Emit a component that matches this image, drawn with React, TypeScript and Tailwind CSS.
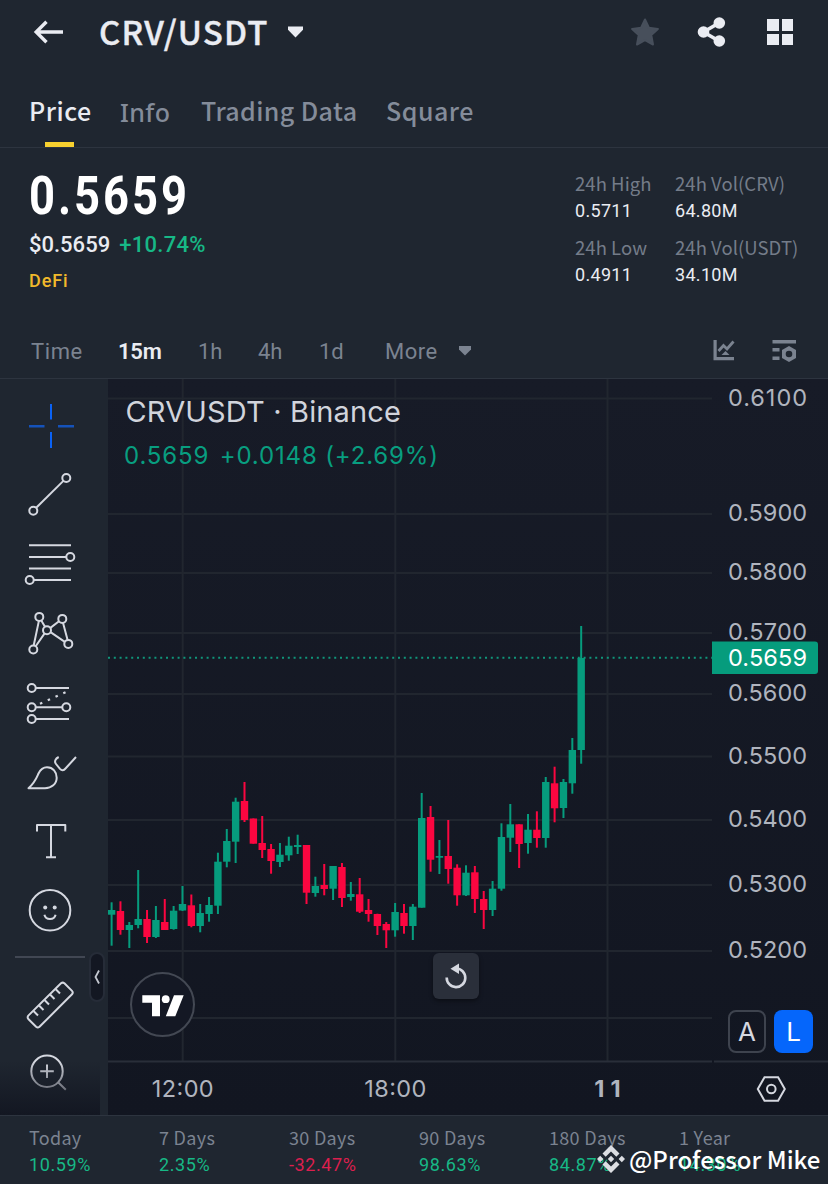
import type { ReactNode } from 'react'
import { clsx } from 'clsx'

const tabs = [
  { label: 'Price', className: "w-[61px] font-['Noto_Sans_CJK_SC',sans-serif] tracking-[0.5px]" },
  { label: 'Info', className: "w-[51px] pt-[2px] font-['Noto_Sans',sans-serif] text-[25px] tracking-[0.4px]" },
  { label: 'Trading Data', className: "w-[155px] font-['Noto_Sans_CJK_SC',sans-serif] tracking-[0.4px]" },
  { label: 'Square', className: "w-[87px] font-['Noto_Sans_CJK_SC',sans-serif] tracking-[0.5px]" },
]

const stats = [
  { label: '24h High', value: '0.5711' },
  { label: '24h Vol(CRV)', value: '64.80M' },
  { label: '24h Low', value: '0.4911' },
  { label: '24h Vol(USDT)', value: '34.10M' },
]

const periods = [
  { label: 'Today', value: '10.59%' },
  { label: '7 Days', value: '2.35%' },
  { label: '30 Days', value: '-32.47%' },
  { label: '90 Days', value: '98.63%' },
  { label: '180 Days', value: '84.87%' },
  { label: '1 Year', value: '14.30%' },
]

const priceLines = [
  { y: 19.5, label: '0.6100' },
  { y: 135, label: '0.5900' },
  { y: 194, label: '0.5800' },
  { y: 254, label: '0.5700' },
  { y: 315, label: '0.5600' },
  { y: 377.5, label: '0.5500' },
  { y: 441, label: '0.5400' },
  { y: 506, label: '0.5300' },
  { y: 572, label: '0.5200' },
  { y: 639, label: '' },
]

const timeLines = [
  { x: 74.7, label: '12:00', width: 62 },
  { x: 287.3, label: '18:00', width: 62 },
  { x: 499.5, label: '11', width: 26.5 },
]

// high, body top, body bottom, low, 1 = up
const candles = [
  [902.3, 910, 914.7, 945.7, 1], [901.3, 911, 930, 934.7, 0], [922, 925, 930, 948, 1],
  [870, 919, 925, 928.3, 1], [910, 919, 937, 943, 0], [906, 920, 937, 938, 1],
  [899, 922, 930, 930, 0], [906, 910.7, 929, 929.7, 1], [886, 904, 910.5, 911, 1],
  [894.5, 905.3, 926, 927.3, 0], [904, 913, 926, 932.3, 1], [897, 905, 914, 921.7, 1],
  [852.7, 861.7, 905.7, 914, 1], [829, 841, 861.7, 867.3, 1], [797.7, 801.7, 841.7, 863, 1],
  [782, 801, 820, 822, 0], [818.5, 818.5, 843.7, 843.7, 0], [816, 843, 850, 858, 0],
  [844, 849, 861, 873.7, 0], [843, 854.7, 862, 867, 1], [836.7, 845.7, 855.3, 860.7, 1],
  [834.7, 845, 847, 854, 1], [845, 845, 892.7, 904, 0], [876.7, 886, 893, 896.7, 1],
  [864, 885, 889, 895.3, 0], [866, 866, 888.7, 900, 1], [863, 867, 898, 907, 0],
  [882, 894, 897, 900.7, 1], [878, 894.3, 911.7, 913, 0], [899, 910, 914, 921.7, 0],
  [913.7, 914, 926, 935, 0], [922, 924, 930.3, 948, 0], [903, 912, 930.3, 936.7, 1],
  [904, 913, 926, 933.7, 0], [904, 906.7, 926, 940, 1], [793, 818, 907.7, 907.7, 1],
  [806, 817, 859.7, 871.7, 0], [840, 856, 857.7, 874, 1], [820, 856, 869, 883.7, 0],
  [864.3, 867.7, 895.3, 905.7, 0], [865.3, 872.7, 895.3, 896, 1], [866, 872.3, 899, 913, 0],
  [891, 899, 910, 929, 0], [881, 888.7, 910, 916, 1], [823.3, 837, 888.7, 890.7, 1],
  [804, 824.3, 837.7, 852, 1], [824.3, 824.3, 844, 868, 0], [814, 829.7, 843, 853.7, 1],
  [811.3, 829.7, 838, 847.7, 0], [777, 782, 838, 847.7, 1], [766.7, 783.3, 808.3, 822.3, 0],
  [779, 782, 808, 818, 1], [738, 750, 783.3, 793.7, 1], [626, 658, 750, 763.7, 1],
]

const CHART_TOP = 379
const CANDLE_STEP = 8.86
const FIRST_CANDLE = 3.6

export default function App() {
  return (
    <div className="relative flex h-[1184px] w-[828px] flex-col overflow-hidden bg-[#1f2630] font-[Roboto,sans-serif] text-[#eaecf2]">
      <Header />
      <Tabs />
      <PriceSummary />
      <Intervals />
      <div className="flex h-[736px]">
        <DrawingTools />
        <Chart />
      </div>
      <Performance />
      <Watermark />
    </div>
  )
}

function Header() {
  return (
    <header className="flex h-[64px] shrink-0 items-center pr-[35px] pl-[33px]">
      <svg width="31" height="24" viewBox="0 0 31 24" fill="none" stroke="#eaecf2" strokeWidth="3.4">
        <path d="M30 12H3.5M13.500 1.800 3.200 12l10.300 10.200" />
      </svg>
      <h1 className="ml-[35px] w-[168px] pb-[2px] font-['Noto_Sans_CJK_SC',sans-serif] text-[33px] leading-[62px] font-medium whitespace-nowrap tracking-[1.2px] [-webkit-text-stroke:0.4px_#eaecf2]">
        CRV/USDT
      </h1>
      <svg className="ml-[20px]" width="17" height="12" viewBox="0 0 17 12" fill="#eaecf2">
        <path d="M1 0.500h15v3.200L8.500 11.500 1 3.700z" />
      </svg>
      <div className="ml-auto flex items-center">
        <svg width="30" height="30" viewBox="0 0 30 30" fill="#474f5b" stroke="#474f5b" strokeWidth="2" strokeLinejoin="round">
          <path d="M15 2.500l3.900 8.200 9 1.200-6.600 6.200 1.700 9.400-8-4.400-8 4.400 1.700-9.400-6.600-6.200 9-1.200z" />
        </svg>
        <svg className="ml-[37px]" width="29" height="30" viewBox="0 0 29 30" fill="#eaecf2" stroke="#eaecf2">
          <path d="M22 6 6.500 15 22 24" fill="none" strokeWidth="3.600" />
          <g stroke="none">
            <circle cx="22.300" cy="6" r="5.800" />
            <circle cx="6.500" cy="15" r="5.800" />
            <circle cx="22.300" cy="24" r="5.800" />
          </g>
        </svg>
        <div className="ml-[41px] grid grid-cols-2 gap-[3px]">
          <i className="size-[11.5px] bg-[#eaecf2]" />
          <i className="size-[11.5px] bg-[#eaecf2]" />
          <i className="size-[11.5px] bg-[#eaecf2]" />
          <i className="size-[11.5px] bg-[#eaecf2]" />
        </div>
      </div>
    </header>
  )
}

function Tabs() {
  return (
    <nav className="flex h-[84px] shrink-0 gap-[30px] border-b border-[#2d343f] pt-[26px] pl-[29px] text-[25px] leading-[40px] font-medium">
      {tabs.map((tab, i) => (
        <div
          key={tab.label}
          className={clsx('flex flex-col whitespace-nowrap', tab.className, i === 0 ? 'text-[#eaecf2]' : 'text-[#848c9a]')}
        >
          {tab.label}
          {i === 0 && <span className="mt-[12px] h-[5px] w-[29px] self-center bg-[#f8d12f]" />}
        </div>
      ))}
    </nav>
  )
}

function PriceSummary() {
  return (
    <section className="flex h-[176px] shrink-0 justify-between pl-[29px]">
      <div className="pt-[18px]">
        <p className="w-[190px] origin-left scale-x-[0.84] text-[54px] leading-[60px] font-bold tracking-[3.5px] text-white">0.5659</p>
        <p className="mt-[5px] flex gap-[9px] text-[22px] leading-[28px] font-medium whitespace-nowrap">
          <span>$0.5659</span>
          <span className="tracking-[0.3px] text-[#17b886]">+10.74%</span>
        </p>
        <p className="mt-[9px] text-[18px] leading-[26px] font-medium tracking-[0.9px] text-[#f0b92b]">DeFi</p>
      </div>
      <dl className="grid w-[253px] grid-cols-[100px_1fr] content-start gap-y-[9px] pt-[22px] whitespace-nowrap">
        {stats.map((s) => (
          <div key={s.label}>
            <dt className="font-['Noto_Sans_CJK_SC',sans-serif] text-[18.5px] leading-[27px] tracking-[0.05px] text-[#747c89]">{s.label}</dt>
            <dd className="text-[18px] leading-[28px] tracking-[0.3px]">{s.value}</dd>
          </div>
        ))}
      </dl>
    </section>
  )
}

function Intervals() {
  return (
    <div className="flex h-[55px] shrink-0 items-center border-b border-[#2d343f] pl-[31px] text-[22px] whitespace-nowrap text-[#7b8390]">
      <span className="w-[87px] tracking-[0.6px]">Time</span>
      <span className="w-[80px] font-semibold tracking-[-0.2px] text-[#eaecf2]">15m</span>
      <span className="w-[60px]">1h</span>
      <span className="w-[61px]">4h</span>
      <span className="w-[66px]">1d</span>
      <span className="w-[74px] tracking-[0.5px]">More</span>
      <svg width="12" height="10" viewBox="0 0 12 10" fill="#7b8390">
        <path d="M0 0h12v3.500L6 9.500 0 3.500z" />
      </svg>
      <svg className="ml-[242px]" width="22" height="22" viewBox="0 0 22 22" fill="none" stroke="#7b8390" strokeWidth="3.200">
        <path d="M2.100 0v18.600H21" />
        <path d="M5.500 11 10.500 5.500l3.500 3.500L20.500 1.500" strokeWidth="2.800" />
        <path d="M8.500 15l4-4 4 4z" fill="#7b8390" stroke="none" />
      </svg>
      <svg className="ml-[37px]" width="25" height="24" viewBox="0 0 25 24" fill="#7b8390">
        <path d="M0.500 1h23.500v3.500H0.500zM0.500 9h7v3.500h-7zM0.500 17.500h7V21h-7z" />
        <path fillRule="evenodd" d="M17 7l7 4v8l-7 4-7-4v-8zM17 11.700a3.300 3.300 0 1 0 0 6.600a3.300 3.300 0 1 0 0-6.600z" />
      </svg>
    </div>
  )
}

function Tool({ children }: { children: ReactNode }) {
  return (
    <svg width="56" height="56" viewBox="0 0 56 56" fill="none" stroke="#d5d8e0" strokeWidth="2" strokeLinejoin="round">
      {children}
    </svg>
  )
}

function DrawingTools() {
  return (
    <aside className="relative w-[108px] shrink-0">
      <div className="flex flex-col gap-[13.2px] pt-[19px] pl-[22px]">
        <Tool>
          <path d="M29 6v15.500M29 34v16" stroke="#0a62f5" />
          <path d="M7 28.300h15.500M36 28.300h16" stroke="#1552ba" strokeWidth="2.500" />
        </Tool>
        <Tool>
          <circle cx="11.300" cy="43.700" r="4" />
          <circle cx="44.300" cy="11" r="4" />
          <path d="M14.200 40.800 41.400 13.900" />
        </Tool>
        <Tool>
          <path d="M7 9.300h42M7 21h37M7 32.500h42M12 44h37" />
          <circle cx="48.300" cy="21" r="4" />
          <circle cx="7.700" cy="44" r="4" />
        </Tool>
        <Tool>
          <g transform="translate(0 -0.8)">
            <path d="M16.900 15.700 11.700 40.300M19.300 15.200 23 21.500M28.400 22.700 37 16M41 17.600l4.600 17.100M28.500 27 42.800 36.600M22.600 28.200 13.700 41" />
            <circle cx="17.300" cy="11.700" r="4" />
            <circle cx="40.300" cy="13.700" r="4" />
            <circle cx="25" cy="25" r="4" />
            <circle cx="11.300" cy="44.300" r="4" />
            <circle cx="46.300" cy="38.700" r="4" />
          </g>
        </Tool>
        <Tool>
          <path d="M14 13h33M14 32.300h26M14 44h33" />
          <path d="M18 28.700 44 17" strokeDasharray="2.500 6" strokeWidth="2.200" />
          <circle cx="9.700" cy="13" r="4" />
          <circle cx="9.700" cy="32.300" r="4" />
          <circle cx="44.300" cy="32.300" r="4" />
          <circle cx="9.700" cy="44" r="4" />
        </Tool>
        <Tool>
          <path d="M6.500 44.200C13 38.500 14.500 34 16.500 29.500C18.500 25.300 21 23.300 25 23.300C31 23.300 34.700 28 34.700 33.700C34.700 40 29.500 44.200 23 44.200Z" />
          <path d="M36.700 13C33.500 14.500 32 17.500 34 20L38 24.800C39.800 26.800 41.800 26.500 43.500 24.500L54 13" />
        </Tool>
        <Tool>
          <path d="M15 18.500v-6.500h28.300v6.500M29 12v32M24 44.300h10" />
        </Tool>
        <Tool>
          <circle cx="28" cy="28.300" r="20.300" />
          <circle cx="23.200" cy="25.600" r="2" fill="#d5d8e0" stroke="none" />
          <circle cx="32.700" cy="25.600" r="2" fill="#d5d8e0" stroke="none" />
          <path d="M22.400 32.800c1.400 5.700 9.800 5.700 11.200 0" />
        </Tool>
      </div>
      <div className="mt-[18px] ml-[15px] h-[2px] w-[70px] bg-[#414753]" />
      <div className="flex flex-col gap-[12px] pt-[19px] pl-[22px]">
        <Tool>
          <path d="M39 6.300q1.700-1.300 3.400 0l7.600 7.600q1.500 1.700 0 3.400L17.500 49.800q-1.700 1.300-3.400 0L6.300 42q-1.300-1.700 0-3.400z" />
          <path d="M11.500 34l4.500 4.500M17 28.500l4.500 4.500M22.500 23l4.500 4.500M28 17.500l4.500 4.500M33.500 12l4.500 4.500" />
        </Tool>
        <Tool>
          <circle cx="25" cy="26.300" r="15.700" />
          <path d="M25 19.500v13.600M18.200 26.300h13.600M36.300 37.500l7.500 7.300" />
        </Tool>
      </div>
      <div className="absolute bottom-0 left-0 h-[54px] w-[100px] bg-gradient-to-b from-[#131722]/0 to-[#131722]" />
      <button className="absolute top-[573px] left-[89px] flex h-[50px] w-[16px] items-center justify-center rounded-[8px] border-2 border-[#262c38] bg-[#131722]">
        <svg width="6" height="14" viewBox="0 0 6 14" fill="none" stroke="#c3c7d0" strokeWidth="1.800">
          <path d="M5 0.500 1.500 7 5 13.500" />
        </svg>
      </button>
    </aside>
  )
}

function Chart() {
  return (
    <main className="relative w-[720px] bg-gradient-to-b from-[#171b27] to-[#121621] font-[Inter,sans-serif]">
      <svg width="720" height="736" viewBox="0 0 720 736" className="block">
        <g stroke="#21262f" strokeWidth="2">
          {priceLines.map((l) => (
            <path key={l.y} d={`M0 ${l.y}H604`} />
          ))}
          {timeLines.map((l) => (
            <path key={l.x} d={`M${l.x} 0V682`} />
          ))}
          <path d="M0 682.500H604M606 682.500H720" stroke="#292e39" />
        </g>
        {candles.map(([high, top, bottom, low, up], i) => {
          const x = FIRST_CANDLE + i * CANDLE_STEP
          return (
            <g key={i} fill={up ? '#069c7d' : '#fb0640'}>
              <rect x={x - 1} y={high - CHART_TOP} width="2" height={low - high} />
              <rect x={x - 3.7} y={top - CHART_TOP} width="7.400" height={bottom - top} />
            </g>
          )
        })}
        <path d="M0 278.800H604" stroke="#10957a" strokeWidth="2" strokeDasharray="2 3.800" />
        <g fill="#b0b4be" fontSize="23.500">
          {priceLines.map((l) => l.label && (
            <text key={l.y} x="620" y={l.y + 7.4} textLength="79">{l.label}</text>
          ))}
          {timeLines.map((l) => (
            <text
              key={l.x}
              x={l.x - l.width / 2}
              y="718.400"
              textLength={l.width}
              fontWeight={l.label === '11' ? 700 : 400}
            >
              {l.label}
            </text>
          ))}
        </g>
        <path d="M604 262.500h103a3 3 0 0 1 3 3v26.500a3 3 0 0 1-3 3H604z" fill="#069c7d" />
        <text x="620" y="287" fill="#fff" fontSize="23.500" textLength="79">0.5659</text>
        <g fill="none" stroke="#d5d8e0" strokeWidth="2">
          <path d="M656.500 698.300h13.600l6.700 11.700-6.700 11.700h-13.600L649.800 710z" />
          <circle cx="663.300" cy="710" r="4.300" />
        </g>
      </svg>

      <div className="absolute top-[15px] left-[16px] whitespace-nowrap">
        <p className="pl-[1.5px] text-[29px] leading-[36px] tracking-[0.15px] text-[#d1d4dc]">CRVUSDT · Binance</p>
        <p className="mt-[11px] flex gap-[10.5px] text-[24px] leading-[30px] tracking-[0.85px] text-[#089e80]">
          <span>0.5659</span>
          <span>+0.0148 (+2.69%)</span>
        </p>
      </div>

      {/* TradingView badge */}
      <div className="absolute top-[593px] left-[22px] size-[65px] rounded-full border-2 border-[#434853] bg-[#141824]">
        <svg width="61" height="61" viewBox="0 0 61 61" fill="#fff">
          <path d="M10.300 21.300H28V42.300H20V28.700H10.300zM42 21.300H51.700L43.300 42.300H33.800z" />
          <circle cx="33.700" cy="25.200" r="3.900" />
        </svg>
      </div>

      <button className="absolute top-[574px] left-[325px] flex size-[46px] items-center justify-center rounded-[6px] bg-[#2a2f3a] shadow-[0_2px_4px_rgba(0,0,0,0.4)]">
        <svg width="24" height="26" viewBox="0 0 24 26" fill="none" stroke="#d5d8e0" strokeWidth="2.600">
          <path d="M2.700 14.500A9.300 9.300 0 1 0 12 5.500" />
          <path d="M6.500 5.800 15 0.500V11z" fill="#d5d8e0" stroke="none" />
        </svg>
      </button>

      <div className="absolute top-[631px] left-[620px] flex gap-[8px] text-[26px] leading-[43px]">
        <button className="flex h-[43px] w-[38px] items-center justify-center rounded-[8px] border-2 border-[#3e434e] text-[#d5d8e0]">A</button>
        <button className="flex h-[43px] w-[39px] items-center justify-center rounded-[8px] bg-[#0566fb] text-white">L</button>
      </div>
    </main>
  )
}

function Performance() {
  return (
    <footer className="grid h-[69px] grid-cols-[repeat(6,130px)] border-t border-[#2d343f] pt-[8px] pl-[29px] whitespace-nowrap">
      {periods.map((p) => (
        <div key={p.label}>
          <p className="font-['Noto_Sans_CJK_SC',sans-serif] text-[18px] leading-[26px] tracking-[0.3px] text-[#7b8390]">{p.label}</p>
          <p className={clsx('text-[18px] leading-[30px] tracking-[0.6px]', p.value.startsWith('-') ? 'text-[#dc1f4e]' : 'text-[#17b886]')}>{p.value}</p>
        </div>
      ))}
    </footer>
  )
}

function Watermark() {
  return (
    <div className="absolute top-[1141px] left-[597px] flex items-center gap-[4px] text-white">
      <svg width="28" height="28" viewBox="0 0 28 28" fill="#dcdee2">
        <path d="M14 0 22.500 8.500 19.300 11.700 14 6.400 8.700 11.700 5.500 8.500zM14 28 22.500 19.500 19.300 16.300 14 21.600 8.700 16.300 5.500 19.500zM14 10.800 17.200 14 14 17.200 10.800 14zM3.200 10.800 6.400 14 3.200 17.200 0 14zM24.800 10.800 28 14 24.800 17.200 21.600 14z" />
      </svg>
      <span className="font-['Noto_Sans_CJK_SC',sans-serif] text-[24px] leading-[36px] font-medium whitespace-nowrap">@Professor Mike</span>
    </div>
  )
}
